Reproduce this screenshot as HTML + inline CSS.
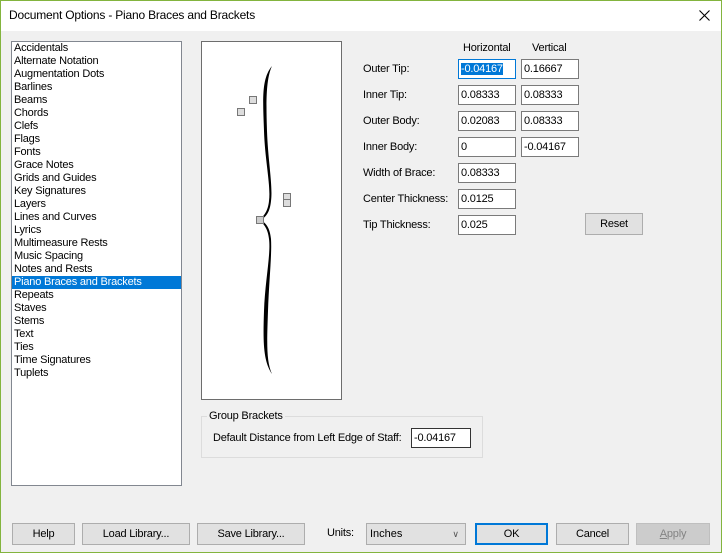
<!DOCTYPE html>
<html><head><style>
*{box-sizing:border-box;margin:0;padding:0}
body{width:722px;height:553px;overflow:hidden;background:#f0f0f0;font-family:"Liberation Sans",sans-serif;font-size:11px;color:#000;position:relative}
.win{position:absolute;left:0;top:0;width:722px;height:553px;border:1px solid #83b43e}
.title{position:absolute;left:1px;top:1px;width:720px;height:30px;background:#fff}
.abs{position:absolute}
.t{position:absolute;white-space:nowrap;letter-spacing:-0.2px}
.list{position:absolute;left:11px;top:41px;width:171px;height:445px;background:#fff;border:1px solid #828790}
.list div{height:13px;line-height:13px;padding-left:2px;letter-spacing:-0.2px}
.list .sel{background:#0078d7;color:#fff}
.box{position:absolute;width:58px;height:20px;background:#fff;border:1px solid #7a7a7a;line-height:18px;padding-left:2px;letter-spacing:-0.2px}
.btn{position:absolute;height:22px;background:#e1e1e1;border:1px solid #adadad;text-align:center;line-height:20px;letter-spacing:-0.2px}
</style></head><body>
<div class="win"></div>
<div class="title"></div>
<div class="t" style="left:9px;top:8px;font-size:12px;color:#000">Document Options - Piano Braces and Brackets</div>
<svg class="abs" style="left:699px;top:10px" width="11" height="11"><path d="M0.5,0.5 L10.5,10.5 M10.5,0.5 L0.5,10.5" stroke="#000" stroke-width="1.1"/></svg>

<div class="list">
<div>Accidentals</div><div>Alternate Notation</div><div>Augmentation Dots</div><div>Barlines</div><div>Beams</div><div>Chords</div><div>Clefs</div><div>Flags</div><div>Fonts</div><div>Grace Notes</div><div>Grids and Guides</div><div>Key Signatures</div><div>Layers</div><div>Lines and Curves</div><div>Lyrics</div><div>Multimeasure Rests</div><div>Music Spacing</div><div>Notes and Rests</div><div class="sel">Piano Braces and Brackets</div><div>Repeats</div><div>Staves</div><div>Stems</div><div>Text</div><div>Ties</div><div>Time Signatures</div><div>Tuplets</div>
</div>

<div class="abs" style="left:201px;top:41px;width:141px;height:359px;background:#fff;border:1px solid #6d6d6d"></div>
<svg class="abs" style="left:201px;top:41px" width="141" height="359">
<path d="M71,25 C60,38 62,60 63,90 C64,120 70,145 68,160 C67,170 63,175 58,179 C63,183 67,188 68,198 C70,213 64,240 63,270 C62,300 62,320 71,333 C65,320 66,300 67,270 C68,240 71,213 70,198 C69,188 66,183 60,179 C66,175 69,170 70,160 C72,145 67,120 66,90 C65,60 65,38 71,25 Z" fill="#000"/>
<rect x="48.5" y="55.5" width="7" height="7" fill="#ddd" stroke="#777"/>
<rect x="36.5" y="67.5" width="7" height="7" fill="#ddd" stroke="#777"/>
<rect x="82.5" y="152.5" width="7" height="7" fill="#ddd" stroke="#777"/>
<rect x="82.5" y="158.5" width="7" height="7" fill="#ddd" stroke="#777"/>
<rect x="55.5" y="175.5" width="7" height="7" fill="#ccc" stroke="#777"/>
</svg>

<div class="t" style="left:463px;top:42px">Horizontal</div>
<div class="t" style="left:532px;top:42px">Vertical</div>

<div class="t" style="left:363px;top:63px">Outer Tip:</div>
<div class="box" style="left:458px;top:59px;border-color:#0078d7"><span style="background:#0078d7;color:#fff">-0.04167</span></div>
<div class="box" style="left:521px;top:59px">0.16667</div>
<div class="t" style="left:363px;top:89px">Inner Tip:</div>
<div class="box" style="left:458px;top:85px">0.08333</div>
<div class="box" style="left:521px;top:85px">0.08333</div>
<div class="t" style="left:363px;top:115px">Outer Body:</div>
<div class="box" style="left:458px;top:111px">0.02083</div>
<div class="box" style="left:521px;top:111px">0.08333</div>
<div class="t" style="left:363px;top:141px">Inner Body:</div>
<div class="box" style="left:458px;top:137px">0</div>
<div class="box" style="left:521px;top:137px">-0.04167</div>
<div class="t" style="left:363px;top:167px">Width of Brace:</div>
<div class="box" style="left:458px;top:163px">0.08333</div>
<div class="t" style="left:363px;top:193px">Center Thickness:</div>
<div class="box" style="left:458px;top:189px">0.0125</div>
<div class="t" style="left:363px;top:219px">Tip Thickness:</div>
<div class="box" style="left:458px;top:215px">0.025</div>
<div class="btn" style="left:585px;top:213px;width:58px">Reset</div>

<div class="abs" style="left:201px;top:416px;width:282px;height:42px;border:1px solid #dcdcdc"></div>
<div class="t" style="left:207px;top:410px;background:#f0f0f0;padding:0 2px">Group Brackets</div>
<div class="t" style="left:213px;top:432px">Default Distance from Left Edge of Staff:</div>
<div class="box" style="left:411px;top:428px;width:60px;border-color:#333">-0.04167</div>

<div class="btn" style="left:12px;top:523px;width:63px">Help</div>
<div class="btn" style="left:82px;top:523px;width:108px">Load Library...</div>
<div class="btn" style="left:197px;top:523px;width:108px">Save Library...</div>
<div class="t" style="left:327px;top:527px">Units:</div>
<div class="abs" style="left:366px;top:523px;width:100px;height:22px;background:#e1e1e1;border:1px solid #adadad;line-height:20px;padding-left:3px">Inches<span style="position:absolute;right:6px;top:0;font-size:9px;color:#555">∨</span></div>
<div class="btn" style="left:475px;top:523px;width:73px;border:2px solid #0078d7;line-height:18px">OK</div>
<div class="btn" style="left:556px;top:523px;width:73px">Cancel</div>
<div class="btn" style="left:636px;top:523px;width:74px;background:#ccc;border-color:#bfbfbf;color:#838383"><u>A</u>pply</div>
</body></html>
